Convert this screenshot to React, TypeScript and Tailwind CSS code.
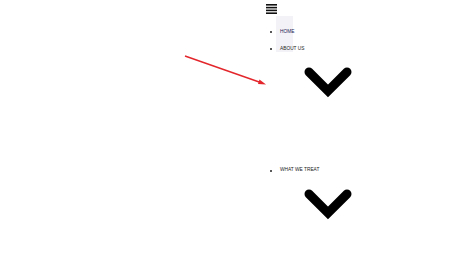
import React from "react";

function Chevron() {
  return (
    <svg width="48" height="31" viewBox="0 0 48 31" className="block">
      <polyline
        points="5,5 24,24 43,5"
        fill="none"
        stroke="#000"
        strokeWidth="9"
        strokeLinecap="round"
        strokeLinejoin="miter"
      />
    </svg>
  );
}

function Item({ label, active }: { label: string; active?: boolean }) {
  return (
    <li className="flex items-center h-[17px]">
      <span className="w-[2px] h-[2px] rounded-full bg-[#222] ml-[4px] mr-[8px]" />
      <a className={`text-[4.8px] leading-none ${active ? "text-[#232155]" : "text-[#222]"}`}>{label}</a>
    </li>
  );
}

export default function App() {
  return (
    <div
      className="relative w-[474px] h-[269px] bg-white overflow-hidden"
      style={{ fontFamily: '"Liberation Sans", Arial, sans-serif' }}
    >
      <nav className="relative pl-[266px] pt-[4px]">
        <svg width="11" height="10" viewBox="0 0 11 10" className="block">
          <rect x="0" y="0" width="11" height="1.6" fill="#111" />
          <rect x="0" y="2.8" width="11" height="1.6" fill="#111" />
          <rect x="0" y="5.6" width="11" height="1.6" fill="#111" />
          <rect x="0" y="8.4" width="11" height="1.6" fill="#111" />
        </svg>
        <div className="absolute left-[276px] top-[16px] w-[17px] h-[36px] bg-[#f3f3f7]" />
        <ul className="relative mt-[9.5px]">
          <Item label="HOME" active />
          <Item label="ABOUT US" />
          <div className="ml-[38px] mt-[9.5px]">
            <Chevron />
          </div>
          <div className="h-[64px]" />
          <Item label="WHAT WE TREAT" />
          <div className="ml-[38px] mt-[9.5px]">
            <Chevron />
          </div>
        </ul>
      </nav>
      <svg className="absolute left-0 top-0 pointer-events-none" width="474" height="269">
        <line x1="185" y1="56" x2="262" y2="83" stroke="#e3262b" strokeWidth="1.4" />
        <polygon points="266,84.5 259.5,79.5 258,84" fill="#e3262b" />
      </svg>
    </div>
  );
}
